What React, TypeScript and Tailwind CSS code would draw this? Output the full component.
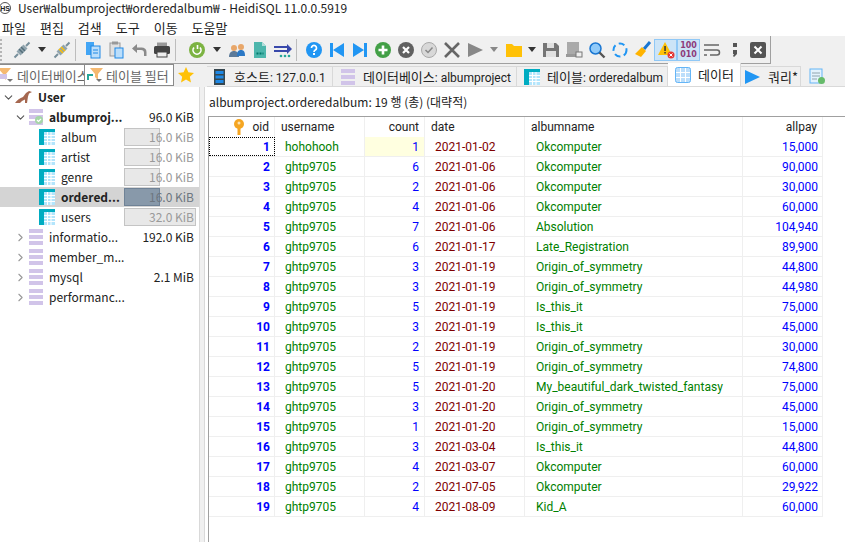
import { ChevronDown, ChevronRight } from "lucide-react"

const FONT = "font-['Noto_Sans_CJK_KR','Noto_Sans',sans-serif]"
const GRID_FONT = "font-['Roboto','Noto_Sans_CJK_KR',sans-serif]"

const rows = [
  ["1", "hohohooh", "1", "2021-01-02", "Okcomputer", "15,000"],
  ["2", "ghtp9705", "6", "2021-01-06", "Okcomputer", "90,000"],
  ["3", "ghtp9705", "2", "2021-01-06", "Okcomputer", "30,000"],
  ["4", "ghtp9705", "4", "2021-01-06", "Okcomputer", "60,000"],
  ["5", "ghtp9705", "7", "2021-01-06", "Absolution", "104,940"],
  ["6", "ghtp9705", "6", "2021-01-17", "Late_Registration", "89,900"],
  ["7", "ghtp9705", "3", "2021-01-19", "Origin_of_symmetry", "44,800"],
  ["8", "ghtp9705", "3", "2021-01-19", "Origin_of_symmetry", "44,980"],
  ["9", "ghtp9705", "5", "2021-01-19", "Is_this_it", "75,000"],
  ["10", "ghtp9705", "3", "2021-01-19", "Is_this_it", "45,000"],
  ["11", "ghtp9705", "2", "2021-01-19", "Origin_of_symmetry", "30,000"],
  ["12", "ghtp9705", "5", "2021-01-19", "Origin_of_symmetry", "74,800"],
  ["13", "ghtp9705", "5", "2021-01-20", "My_beautiful_dark_twisted_fantasy", "75,000"],
  ["14", "ghtp9705", "3", "2021-01-20", "Origin_of_symmetry", "45,000"],
  ["15", "ghtp9705", "1", "2021-01-20", "Origin_of_symmetry", "15,000"],
  ["16", "ghtp9705", "3", "2021-03-04", "Is_this_it", "44,800"],
  ["17", "ghtp9705", "4", "2021-03-07", "Okcomputer", "60,000"],
  ["18", "ghtp9705", "2", "2021-07-05", "Okcomputer", "29,922"],
  ["19", "ghtp9705", "4", "2021-08-09", "Kid_A", "60,000"],
]

function TableIcon({ className = "" }: { className?: string }) {
  return (
    <svg width="16" height="16" viewBox="0 0 16 16" className={`shrink-0 ${className}`}>
      <rect width="16" height="16" fill="#00acc1" />
      <rect x="5" y="3" width="11" height="13" fill="#b3e5fc" />
      <path d="M8.500 3v13M12 3v13M5 6.500h11M5 9.500h11M5 12.500h11" stroke="#fff" strokeWidth="1" />
    </svg>
  )
}

function DbIcon({ checked }: { checked?: boolean }) {
  return (
    <svg width="16" height="16" viewBox="0 0 16 16" className="shrink-0">
      <path d="M1 0h14v4H1zM1 6h14v4H1zM1 12h14v4H1z" fill="#d1c4e9" />
      {checked && <circle cx="11" cy="11" r="4" fill="#a5d6a7" />}
      {checked && <path d="M9 11l1.500 1.500L13 10" fill="none" stroke="#fff" strokeWidth="1.200" />}
    </svg>
  )
}

function PlugIcon({ accent }: { accent?: boolean }) {
  return (
    <svg width="18" height="18" viewBox="0 0 18 18">
      <path d="M1.500 16.500l3.500-3.500M16.500 1.500L13 5" stroke="#78909c" strokeWidth="2" />
      <path d="M3.500 10.500l7-7 4 4-7 7z" fill="#90a4ae" />
      <path d="M6 8l4 4M8 6l4 4" stroke={accent ? "#ffc107" : "#546e7a"} strokeWidth="1.500" />
    </svg>
  )
}

function Caret({ dark, w }: { dark?: boolean; w: string }) {
  return (
    <div className={`flex justify-center ${w}`}>
      <svg width="8" height="5" viewBox="0 0 8 5" className="shrink-0">
        <path d="M0 0h8L4 5z" fill={dark ? "#333" : "#888"} />
      </svg>
    </div>
  )
}

function Sep({ right }: { right: string }) {
  return <div className={`ml-[2px] h-[22px] w-px bg-[#bdbdbd] ${right}`} />
}

function Tool({ children, on }: { children: React.ReactNode; on?: boolean }) {
  return (
    <div className={`flex h-[22px] w-[23px] items-center justify-center ${on ? "border border-[#90c8f6] bg-[#cce4f7]" : ""}`}>
      {children}
    </div>
  )
}

function Toolbar() {
  return (
    <div className="flex h-[28px] w-[771px] items-center border-r border-b border-[#a0a0a0] pl-[8px]">
      <div className="absolute left-0 h-[22px] border-l-2 border-dotted border-[#b5b5b5]" />
      <div className="w-[2px]" />
      <Tool><PlugIcon /></Tool>
      <Caret dark w="w-[17px]" />
      <Tool><PlugIcon accent /></Tool>
      <Sep right="mr-[5px]" />
      <Tool>
        <svg width="16" height="18" viewBox="0 0 16 18"><rect x="1" y="1" width="8" height="13" fill="#42a5f5" /><rect x="6" y="5" width="9" height="12" fill="#bbdefb" stroke="#1e88e5" /><path d="M8 9h5M8 12h5" stroke="#1e88e5" /></svg>
      </Tool>
      <Tool>
        <svg width="16" height="18" viewBox="0 0 16 18"><rect x="2" y="2" width="10" height="13" fill="#e0e0e0" stroke="#999" /><rect x="4" y="0.500" width="6" height="3" fill="#999" /><rect x="7" y="7" width="8" height="10" fill="#bbdefb" stroke="#1e88e5" /></svg>
      </Tool>
      <Tool>
        <svg width="18" height="16" viewBox="0 0 18 16"><path d="M7 2L2 6.500 7 11V8h4c2 0 3 1.200 3 3v3h2.500v-4c0-3-2-4.500-5-4.500H7z" fill="#8a8a8a" /></svg>
      </Tool>
      <Tool>
        <svg width="18" height="16" viewBox="0 0 18 16"><rect x="4" y="0.500" width="10" height="4" fill="#999" /><rect x="1" y="4" width="16" height="8" rx="1.500" fill="#444" /><rect x="4" y="10" width="10" height="5" fill="#eee" stroke="#444" /></svg>
      </Tool>
      <Sep right="mr-[9px]" />
      <Tool>
        <svg width="18" height="18" viewBox="0 0 18 18"><circle cx="9" cy="9" r="8" fill="#7cb342" /><path d="M6 6.500a4 4 0 1 0 6 0" fill="none" stroke="#fff" strokeWidth="1.600" /><path d="M9.500 4v4" stroke="#fff" strokeWidth="1.600" /></svg>
      </Tool>
      <Caret dark w="w-[17px]" />
      <Tool>
        <svg width="18" height="16" viewBox="0 0 18 16"><circle cx="6" cy="6" r="3" fill="#e8a76a" /><path d="M1 15c0-4 2-6 5-6s5 2 5 6z" fill="#5c7a99" /><circle cx="13" cy="5" r="3" fill="#e8a76a" /><path d="M9 14c0-4 1-6 4-6s4 2 4 6z" fill="#2b78c5" /></svg>
      </Tool>
      <Tool>
        <svg width="14" height="18" viewBox="0 0 14 18"><path d="M1 1h8l4 4v12H1z" fill="#4db6ac" /><path d="M9 1l4 4H9z" fill="#b2dfdb" /><path d="M3.500 12.500h7" stroke="#00796b" strokeWidth="2" strokeDasharray="2 1" /></svg>
      </Tool>
      <Tool>
        <svg width="20" height="16" viewBox="0 0 20 16"><path d="M1 5h14M1 9h14" stroke="#3949ab" strokeWidth="2" /><path d="M14 2l5 5-5 5z" fill="#3949ab" /><circle cx="8" cy="14" r="1.300" fill="#26a69a" /><circle cx="12" cy="14" r="1.300" fill="#26a69a" /><circle cx="16" cy="14" r="1.300" fill="#26a69a" /></svg>
      </Tool>
      <Sep right="mr-[5px]" />
      <Tool>
        <svg width="18" height="18" viewBox="0 0 18 18"><circle cx="9" cy="9" r="8" fill="#2196f3" /><path d="M6.500 7a2.500 2.500 0 1 1 3.800 2.100C9.300 9.700 9 10 9 11" fill="none" stroke="#fff" strokeWidth="1.700" /><rect x="8" y="12" width="2" height="2" fill="#fff" /></svg>
      </Tool>
      <Tool>
        <svg width="16" height="16" viewBox="0 0 16 16"><path d="M1 1h3v14H1zM15 1v14L4 8z" fill="#2196f3" /></svg>
      </Tool>
      <Tool>
        <svg width="16" height="16" viewBox="0 0 16 16"><path d="M15 1h-3v14h3zM1 1v14l11-7z" fill="#2196f3" /></svg>
      </Tool>
      <Tool>
        <svg width="18" height="18" viewBox="0 0 18 18"><circle cx="9" cy="9" r="8" fill="#43a047" /><path d="M9 4.500v9M4.500 9h9" stroke="#fff" strokeWidth="2.600" /></svg>
      </Tool>
      <Tool>
        <svg width="18" height="18" viewBox="0 0 18 18"><circle cx="9" cy="9" r="8" fill="#616161" /><path d="M6 6l6 6M12 6l-6 6" stroke="#fff" strokeWidth="2.200" /></svg>
      </Tool>
      <Tool>
        <svg width="18" height="18" viewBox="0 0 18 18"><circle cx="9" cy="9" r="7.500" fill="#d8d8d8" stroke="#aaa" /><path d="M5.500 9l2.500 2.500 4.500-5" fill="none" stroke="#888" strokeWidth="1.500" /></svg>
      </Tool>
      <Tool>
        <svg width="16" height="16" viewBox="0 0 16 16"><path d="M1 1l14 14M15 1L1 15" stroke="#666" strokeWidth="2.600" /></svg>
      </Tool>
      <Tool>
        <svg width="16" height="16" viewBox="0 0 16 16"><path d="M1 1l15 7-15 7z" fill="#888" /></svg>
      </Tool>
      <Caret w="w-[16px]" />
      <Tool>
        <svg width="18" height="16" viewBox="0 0 18 16"><path d="M1 2h6l2 2h8v11H1z" fill="#ffc107" /></svg>
      </Tool>
      <Caret dark w="w-[14px]" />
      <Tool>
        <svg width="18" height="16" viewBox="0 0 18 16"><path d="M1 1h13l3 3v11H1z" fill="#757575" /><rect x="5" y="1" width="7" height="5" fill="#e0e0e0" /><rect x="4" y="9" width="10" height="6" fill="#e0e0e0" /></svg>
      </Tool>
      <Tool>
        <svg width="18" height="17" viewBox="0 0 18 17"><rect x="2" y="1" width="12" height="13" fill="#aaa" /><rect x="1" y="13" width="10" height="3" fill="#999" /><rect x="11" y="11" width="6" height="5" fill="#eee" stroke="#777" /></svg>
      </Tool>
      <Tool>
        <svg width="18" height="18" viewBox="0 0 18 18"><circle cx="7.500" cy="7.500" r="5.500" fill="#90caf9" stroke="#1976d2" strokeWidth="1.500" /><path d="M11.500 11.500l5 5" stroke="#555" strokeWidth="2.400" /></svg>
      </Tool>
      <Tool>
        <svg width="18" height="18" viewBox="0 0 18 18"><circle cx="9" cy="9" r="6.500" fill="none" stroke="#2196f3" strokeWidth="2" strokeDasharray="6 3.500" /></svg>
      </Tool>
      <Tool>
        <svg width="18" height="18" viewBox="0 0 18 18"><path d="M16 1l-6 7" stroke="#1976d2" strokeWidth="3" /><path d="M8 6l4 4-5 6-6-3z" fill="#ffb300" /></svg>
      </Tool>
      <Tool on>
        <svg width="18" height="18" viewBox="0 0 18 18"><path d="M8 1l7 13H1z" fill="#ffc107" /><rect x="7.300" y="5" width="1.500" height="5" fill="#333" /><rect x="7.300" y="11" width="1.500" height="1.500" fill="#333" /><circle cx="14" cy="14" r="3.500" fill="#e53935" /><path d="M12.500 12.500l3 3M15.500 12.500l-3 3" stroke="#fff" /></svg>
      </Tool>
      <Tool on>
        <div className="flex flex-col items-center font-['DejaVu_Sans',sans-serif] text-[8px] leading-[9px] font-bold text-[#8e3b7a]">
          <span>100</span>
          <span>010</span>
        </div>
      </Tool>
      <Tool>
        <svg width="18" height="14" viewBox="0 0 18 14"><path d="M1 2h15M1 7h13a2.500 2.500 0 0 1 0 5H7M1 12h3" fill="none" stroke="#666" strokeWidth="1.500" /></svg>
      </Tool>
      <Tool>
        <svg width="8" height="16" viewBox="0 0 8 16"><rect x="2" y="1" width="4" height="4" fill="#555" /><path d="M2 8h4v4l-3 3-1-1 1-2H2z" fill="#555" /></svg>
      </Tool>
      <Tool>
        <svg width="16" height="16" viewBox="0 0 16 16"><rect width="16" height="16" rx="2" fill="#555" /><path d="M4.500 4.500l7 7M11.500 4.500l-7 7" stroke="#fff" strokeWidth="2" /></svg>
      </Tool>
    </div>
  )
}

function TreeRow({ children, size, selected, bar, tone }: { children: React.ReactNode; size?: string; selected?: boolean; bar?: string; tone?: string }) {
  return (
    <div className={`flex h-5 items-center ${selected ? "bg-[#d4d4d4]" : ""}`}>
      {children}
      {size && (
        <div className="relative mr-[5px] ml-auto text-right">
          {bar && <div className={`absolute top-[-3px] left-[-25px] h-[18px] border ${bar} ${selected ? "border-[#6f8296] bg-[#8899aa]" : "border-[#c4c4c4] bg-[#e8e8e8]"}`} />}
          <span className={`relative ${selected ? "text-[#6d7680]" : tone ?? "text-[#222]"}`}>{size}</span>
        </div>
      )}
    </div>
  )
}

function Sidebar() {
  const tables = [
    { name: "album", size: "16.0 KiB", bar: "w-[36px]" },
    { name: "artist", size: "16.0 KiB", bar: "w-[36px]" },
    { name: "genre", size: "16.0 KiB", bar: "w-[36px]" },
    { name: "ordered...", size: "16.0 KiB", bar: "w-[36px]", selected: true },
    { name: "users", size: "32.0 KiB", bar: "w-[72px]" },
  ]
  const dbs = [
    { name: "informatio...", size: "192.0 KiB" },
    { name: "member_m...", size: "" },
    { name: "mysql", size: "2.1 MiB" },
    { name: "performanc...", size: "" },
  ]
  return (
    <div className="flex w-[200px] shrink-0 flex-col border-r border-[#d9d9d9] pt-0 text-[12px] text-[#222]">
      <div className="flex h-5 items-center pl-[2px]">
        <ChevronDown size={13} className="text-[#555]" />
        <svg width="17" height="12" viewBox="0 0 17 12" className="ml-0">
          <path d="M0 12c2-3 5-5 8-6l3-4 3-2 3 1-3 1.500-1 3L12 12h-2V8.500L7 10l-2 2z" fill="#a5674f" />
        </svg>
        <span className="ml-[6px] font-bold">User</span>
      </div>
      <div className="flex h-5 items-center pl-[14px]">
        <ChevronDown size={13} className="text-[#555]" />
        <div className="ml-px"><DbIcon checked /></div>
        <span className="ml-[5px] font-bold">albumproj...</span>
        <span className="mr-[5px] ml-auto">96.0 KiB</span>
      </div>
      {tables.map((t) => (
        <TreeRow key={t.name} size={t.size} bar={t.bar} selected={t.selected} tone="text-[#9a9a9a]">
          <TableIcon className="ml-[39px]" />
          <span className={`ml-[6px] ${t.selected ? "font-bold" : ""}`}>{t.name}</span>
        </TreeRow>
      ))}
      {dbs.map((d) => (
        <TreeRow key={d.name} size={d.size}>
          <ChevronRight size={13} className="ml-[14px] text-[#999]" />
          <div className="ml-px"><DbIcon /></div>
          <span className="ml-[5px]">{d.name}</span>
        </TreeRow>
      ))}
    </div>
  )
}

const cols = [
  { w: "w-[66px]", cell: "justify-end pr-[4px] font-bold text-[#0000ff]" },
  { w: "w-[90px]", cell: "pl-[10px] text-[#008000]" },
  { w: "w-[60px]", cell: "justify-end pr-[5px] text-[#0000ff]" },
  { w: "w-[100px]", cell: "pl-[10px] text-[#800000]" },
  { w: "w-[218px]", cell: "pl-[11px] text-[#008000]" },
  { w: "w-[80px]", cell: "justify-end pr-[4px] text-[#0000ff]" },
]

const heads = [
  { label: "oid", className: "justify-end pr-[5px]" },
  { label: "username", className: "pl-[6px]" },
  { label: "count", className: "justify-end pr-[5px]" },
  { label: "date", className: "pl-[6px]" },
  { label: "albumname", className: "pl-[6px]" },
  { label: "allpay", className: "justify-end pr-[5px]" },
]

function DataGrid() {
  return (
    <div className={`${GRID_FONT} ml-[3px] flex-1 border-t border-l border-[#a0a0a0] text-[12px]`}>
      <div className="flex h-5 w-[614px]">
        {heads.map((h, i) => (
          <div key={h.label} className={`${cols[i].w} relative flex items-center border-r border-[#efefef] text-[#222] ${h.className}`}>
            {i === 0 && (
              <svg width="14" height="16" viewBox="0 0 14 16" className="absolute left-[23px]">
                <circle cx="7" cy="5" r="5" fill="#f5a623" />
                <rect x="5.500" y="8" width="3" height="8" fill="#f5a623" />
                <circle cx="7" cy="4" r="1.500" fill="#fde3b0" />
              </svg>
            )}
            {h.label}
          </div>
        ))}
      </div>
      {rows.map((r, ri) => (
        <div key={r[0]} className="flex h-5 w-[614px] border-b border-[#efefef]">
          {r.map((v, i) => (
            <div
              key={i}
              className={`${cols[i].w} flex items-center border-r border-[#efefef] ${cols[i].cell} ${ri === 0 && i === 2 ? "bg-[#ffffe0]" : ""} ${ri === 0 && i === 0 ? "outline-1 -outline-offset-1 outline-black outline-dotted" : ""}`}
            >
              {v}
            </div>
          ))}
        </div>
      ))}
    </div>
  )
}

function Tab({ icon, ko, rest, w, gap = "gap-[7px]", active }: { icon: React.ReactNode; ko: string; rest?: string; w: string; gap?: string; active?: boolean }) {
  return (
    <div className={`flex items-center border-r border-[#d9d9d9] pl-[7px] ${w} ${gap} ${active ? "-mt-[2px] h-[23px] bg-white" : "h-[20px] border-t"}`}>
      {icon}
      <span className={`${GRID_FONT} text-[12px] whitespace-nowrap text-[#222]`}>
        <span className="font-['Noto_Sans_CJK_KR',sans-serif] text-[13px]">{ko}</span>
        {rest}
      </span>
    </div>
  )
}

export default function App() {
  return (
    <div className={`${FONT} flex h-[542px] w-[845px] flex-col overflow-hidden bg-white text-[12px] leading-none text-[#222]`}>
      <div className="flex h-[15px] items-center pt-px text-[12px]">
        <div className="relative mr-[7px] -ml-px flex h-[12px] w-[12px] items-center justify-center rounded-full border border-[#555] bg-white font-['Liberation_Sans',sans-serif] text-[7px] font-bold">
          HS
        </div>
        <span>User₩albumproject₩orderedalbum₩ - HeidiSQL 11.0.0.5919</span>
      </div>
      <div className="flex h-[21px] items-center gap-[14px] pt-[4px] pl-[2px] text-[13px]">
        {["파일", "편집", "검색", "도구", "이동", "도움말"].map((m) => (
          <span key={m}>{m}</span>
        ))}
      </div>
      <div className="flex h-[51px] flex-col bg-[#f0f0f0]">
        <Toolbar />
        <div className="flex h-[23px]">
          <div className="flex w-[207px] shrink-0 items-start">
            <div className="flex h-[22px] w-[85px] items-center gap-[2px] overflow-hidden border border-l-0 border-[#8a8a8a] bg-white">
              <svg width="15" height="16" viewBox="0 0 15 16" className="shrink-0">
                <path d="M-2 1h13L6 7v6L3 10V7z" fill="#f5b971" />
                <path d="M0 7h7v5H0z" fill="#d1c4e9" />
                <path d="M7 12h6l-3 3z" fill="#777" />
              </svg>
              <span className="text-[13px] whitespace-nowrap text-[#666]">데이터베이스</span>
            </div>
            <div className="flex h-[22px] w-[89px] items-center gap-[3px] border border-l-0 border-[#8a8a8a] bg-white pl-[2px]">
              <svg width="16" height="16" viewBox="0 0 16 16" className="shrink-0">
                <path d="M3 1h13L11 7v6L8 10V7z" fill="#f5b971" />
                <path d="M0 7h6v2H2v4H0z" fill="#26a69a" />
                <path d="M9 12h6l-3 3z" fill="#777" />
              </svg>
              <span className="text-[13px] whitespace-nowrap text-[#666]">테이블 필터</span>
            </div>
            <svg width="16" height="16" viewBox="0 0 16 16" className="mt-[3px] ml-[4px]">
              <path d="M8 0l2.400 5.300 5.600.7-4.200 3.800 1.200 5.700L8 12.600 3 15.500l1.200-5.700L0 6l5.600-.7z" fill="#ffc107" />
            </svg>
          </div>
          <div className="mt-[2px] flex h-[21px] flex-1 items-end border-b border-[#d9d9d9]">
            <Tab w="w-[126px]" gap="gap-[9px]" ko="호스트" rest=": 127.0.0.1" icon={<svg width="11" height="16" viewBox="0 0 11 16"><rect width="11" height="16" fill="#37474f" /><rect x="1.500" y="2" width="8" height="3" fill="#1e88e5" /><rect x="1.500" y="6.500" width="8" height="3" fill="#1e88e5" /><rect x="1.500" y="11" width="8" height="3" fill="#1e88e5" /></svg>} />
            <Tab w="w-[184px]" ko="데이터베이스" rest=": albumproject" icon={<DbIcon />} />
            <Tab w="w-[151px]" ko="테이블" rest=": orderedalbum" icon={<TableIcon />} />
            <Tab w="w-[73px]" active ko="데이터" icon={<svg width="16" height="16" viewBox="0 0 16 16"><rect x="0.500" y="0.500" width="15" height="15" rx="2" fill="#bbdefb" stroke="#64b5f6" /><path d="M5.500 1v14M10.500 1v14M1 5.500h14M1 10.500h14" stroke="#fff" /></svg>} />
            <div className="flex h-[20px] w-[60px] items-center gap-[7px] border-t border-r border-[#d9d9d9] pl-[4px]">
              <svg width="16" height="16" viewBox="0 0 16 16"><path d="M0 1l15 7-15 7z" fill="#2196f3" /></svg>
              <span className="text-[13px] whitespace-nowrap text-[#222]">쿼리*</span>
            </div>
            <svg width="16" height="16" viewBox="0 0 16 16" className="mb-[2px] ml-[8px]">
              <rect x="1" y="1" width="12" height="14" fill="#e3f2fd" stroke="#64b5f6" />
              <path d="M3 5h8M3 8h8M3 11h5" stroke="#90a4ae" />
              <circle cx="12.500" cy="12.500" r="3.500" fill="#66bb6a" />
            </svg>
          </div>
        </div>
      </div>
      <div className="flex min-h-0 flex-1">
        <Sidebar />
        <div className="w-[5px] shrink-0 border-r border-[#d9d9d9] bg-[#f0f0f0]" />
        <div className="flex min-w-0 flex-1 flex-col">
          <div className="flex h-[29px] items-center pt-px pl-[4px] text-[12px]">albumproject.orderedalbum: 19 행 (총) (대략적)</div>
          <DataGrid />
        </div>
      </div>
    </div>
  )
}
